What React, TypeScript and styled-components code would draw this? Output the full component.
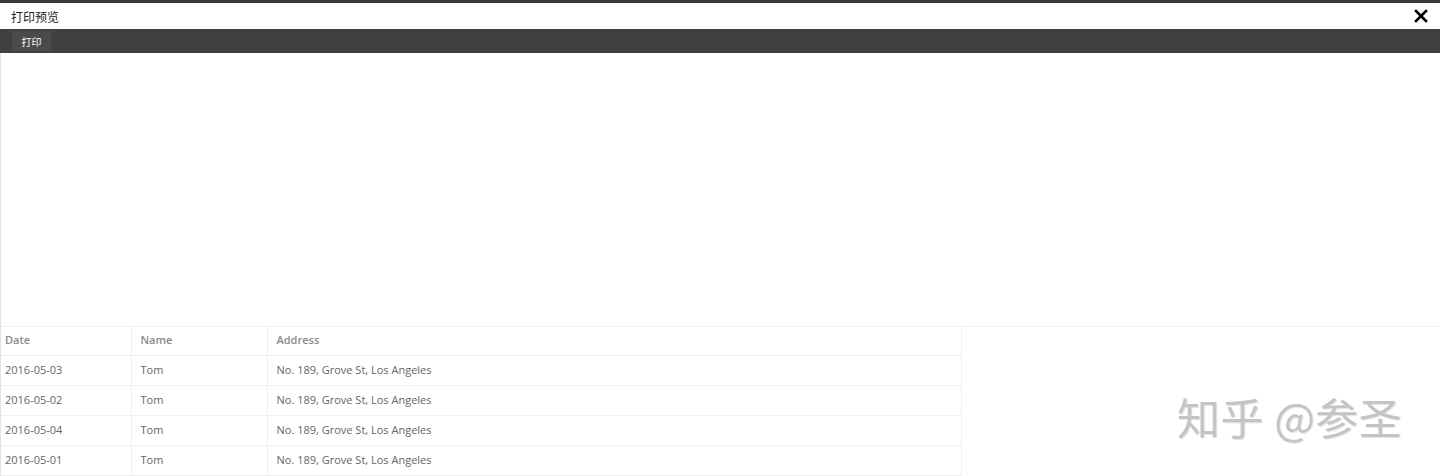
import styled, { createGlobalStyle } from 'styled-components';

const GlobalStyle = createGlobalStyle`
	* { box-sizing: border-box; }
	html, body { margin: 0; padding: 0; background: #fff; }
	body {
		font-family: "Open Sans", "Noto Sans CJK SC", sans-serif;
		overflow: hidden;
	}
`;

interface Row {
	date: string;
	name: string;
	address: string;
}

const rows: Row[] = [
	{ date: '2016-05-03', name: 'Tom', address: 'No. 189, Grove St, Los Angeles' },
	{ date: '2016-05-02', name: 'Tom', address: 'No. 189, Grove St, Los Angeles' },
	{ date: '2016-05-04', name: 'Tom', address: 'No. 189, Grove St, Los Angeles' },
	{ date: '2016-05-01', name: 'Tom', address: 'No. 189, Grove St, Los Angeles' },
];

export default function App() {
	return (
		<>
			<GlobalStyle />
			<StyledWindow>
				<StyledTitleBar>
					<StyledTitle>打印预览</StyledTitle>
					<StyledClose aria-label="关闭">
						<svg width="14" height="14" viewBox="0 0 14 14">
							<path d="M2 2 L12 12 M12 2 L2 12" stroke="#000" strokeWidth="2.6" strokeLinecap="square" />
						</svg>
					</StyledClose>
				</StyledTitleBar>
				<StyledToolbar>
					<StyledToolButton>打印</StyledToolButton>
				</StyledToolbar>
				<StyledPreview>
					<StyledBlank />
					<StyledSheet>
						<StyledTable>
							<thead>
								<tr>
									<StyledHeadCell $first>Date</StyledHeadCell>
									<StyledHeadCell>Name</StyledHeadCell>
									<StyledHeadCell>Address</StyledHeadCell>
								</tr>
							</thead>
							<tbody>
								{rows.map(row => (
									<tr key={row.date}>
										<StyledCell $first>{row.date}</StyledCell>
										<StyledCell>{row.name}</StyledCell>
										<StyledCell>{row.address}</StyledCell>
									</tr>
								))}
							</tbody>
						</StyledTable>
						<StyledWatermark>知乎 @参圣</StyledWatermark>
					</StyledSheet>
				</StyledPreview>
			</StyledWindow>
		</>
	);
}

const StyledWindow = styled.div`
	display: flex;
	flex-direction: column;
	width: 1440px;
	height: 476px;
	border-top: 3px solid #3a3a3a;
	overflow: hidden;
`;

const StyledTitleBar = styled.div`
	display: flex;
	align-items: center;
	justify-content: space-between;
	height: 26px;
	padding: 0 11px 0 11px;
	background: #fff;
`;

const StyledTitle = styled.span`
	font-family: "Noto Sans CJK SC", sans-serif;
	font-size: 12px;
	color: #222;
`;

const StyledClose = styled.button`
	display: flex;
	align-items: center;
	justify-content: center;
	width: 16px;
	height: 16px;
	padding: 0;
	border: 0;
	background: none;
	cursor: pointer;
`;

const StyledToolbar = styled.div`
	display: flex;
	align-items: center;
	height: 24px;
	padding: 0 12px;
	background: #404040;
`;

const StyledToolButton = styled.button`
	height: 20px;
	width: 39px;
	padding: 0;
	border: 0;
	background: #4b4b4b;
	color: #fff;
	font-family: "Noto Sans CJK SC", sans-serif;
	font-size: 10px;
	cursor: pointer;
`;

const StyledPreview = styled.div`
	flex: 1;
	display: flex;
	flex-direction: column;
	border-left: 1px solid #e2e2e2;
`;

const StyledBlank = styled.div`
	flex: none;
	height: 274px;
	border-bottom: 1px solid #f0f0f0;
`;

const StyledSheet = styled.div`
	flex: 1;
	display: flex;
	align-items: flex-start;
`;

const StyledTable = styled.table`
	width: 961px;
	border-collapse: collapse;
	table-layout: fixed;
	border-right: 1px solid #f0f0f0;
	font-size: 11px;

	th:nth-child(1), td:nth-child(1) { width: 130px; }
	th:nth-child(2), td:nth-child(2) { width: 136px; }
`;

const StyledHeadCell = styled.th<{ $first?: boolean }>`
	height: 28px;
	padding: 0 0 2px ${p => (p.$first ? '4px' : '9px')};
	text-align: left;
	font-weight: 600;
	color: #8a8a8a;
	border-bottom: 1px solid #f0f0f0;
	border-left: ${p => (p.$first ? '0' : '1px solid #f0f0f0')};
`;

const StyledCell = styled.td<{ $first?: boolean }>`
	height: 30px;
	padding: 0 0 2px ${p => (p.$first ? '4px' : '9px')};
	color: #666;
	border-bottom: 1px solid #f0f0f0;
	border-left: ${p => (p.$first ? '0' : '1px solid #f0f0f0')};
	white-space: nowrap;
`;

const StyledWatermark = styled.div`
	margin: 64px 0 0 215px;
	font-family: "Noto Sans CJK SC", sans-serif;
	font-size: 43px;
	line-height: 50px;
	letter-spacing: 0.5px;
	color: #c4c4c4;
	text-shadow: 1px 1px 0 #e6e6e6;
	white-space: nowrap;
`;
